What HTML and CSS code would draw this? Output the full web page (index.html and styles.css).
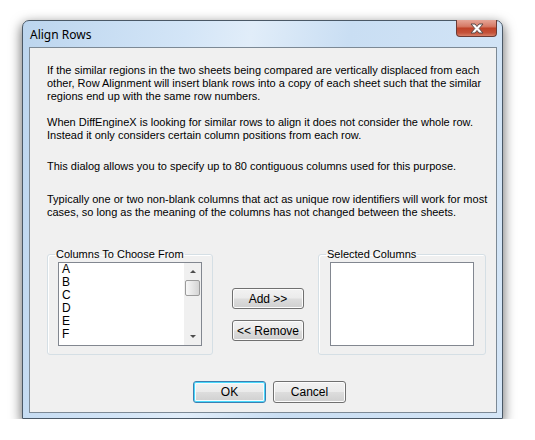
FILE: index.html
```html
<!DOCTYPE html>
<html lang="en">
<head>
    <meta charset="UTF-8">
    <title>Align Rows</title>
    <link rel="stylesheet" href="styles.css">
</head>
<body>
    <div class="window">
        <div class="titlebar">
            <span class="title">Align Rows</span>
            <div class="close">
                <svg width="16" height="11" viewBox="0 0 16 11">
                    <path d="M2 1 H6 L8 3.5 L10 1 H14 L10.2 5.5 L14 10 H10 L8 7.5 L6 10 H2 L5.8 5.5 Z" fill="#fff" stroke="#5a4a48" stroke-width="1" stroke-linejoin="round"/>
                </svg>
            </div>
        </div>

        <div class="client">
            <p class="p1">If the similar regions in the two sheets being compared are vertically displaced from each<br>
            other, Row Alignment will insert blank rows into a copy of each sheet such that the similar<br>
            regions end up with the same row numbers.</p>
            <p class="p2">When DiffEngineX is looking for similar rows to align it does not consider the whole row.<br>
            Instead it only considers certain column positions from each row.</p>
            <p class="p3">This dialog allows you to specify up to 80 contiguous columns used for this purpose.</p>
            <p class="p4">Typically one or two non-blank columns that act as unique row identifiers will work for most<br>
            cases, so long as the meaning of the columns has not changed between the sheets.</p>

            <div class="columns">
                <fieldset class="group group-left">
                    <legend>Columns To Choose From</legend>
                    <div class="listbox">
                        <div class="items">
                            <div>A</div>
                            <div>B</div>
                            <div>C</div>
                            <div>D</div>
                            <div>E</div>
                            <div>F</div>
                        </div>
                        <div class="scrollbar">
                            <div class="arrow up"></div>
                            <div class="thumb"></div>
                            <div class="track"></div>
                            <div class="arrow down"></div>
                        </div>
                    </div>
                </fieldset>

                <div class="middle">
                    <button type="button" class="btn">Add &gt;&gt;</button>
                    <button type="button" class="btn">&lt;&lt; Remove</button>
                </div>

                <fieldset class="group group-right">
                    <legend>Selected Columns</legend>
                    <div class="listbox empty"></div>
                </fieldset>
            </div>

            <div class="actions">
                <button type="button" class="btn btn-default">OK</button>
                <button type="button" class="btn">Cancel</button>
            </div>
        </div>
    </div>
</body>
</html>
```

FILE: styles.css
```css
body {
    margin: 0;
    background-color: #ffffff;
    font-family: "Liberation Sans", Arial, sans-serif;
    font-size: 11px;
    color: #000;
}

/* window frame */
.window {
    box-sizing: border-box;
    width: 481px;
    height: 399px;
    margin: 20px 0 0 22px;
    padding: 0 5px 5px 6px;
    border: 1px solid #4a5866;
    border-radius: 7px 7px 0 0;
    background: linear-gradient(100deg, #bcd5ee 0%, #d3e5f7 30%, #e1edf9 42%, #c9def3 60%, #d5e6f7 100%);
    box-shadow: 0 4px 12px 1px rgba(0, 0, 0, 0.55);
}

.titlebar {
    height: 26px;
    display: flex;
    justify-content: space-between;
    align-items: flex-start;
}

.title {
    font-family: "Noto Sans", "Liberation Sans", sans-serif;
    font-size: 12px;
    line-height: 14px;
    margin-top: 7px;
    margin-left: 1px;
    color: #000;
}

.close {
    width: 41px;
    height: 17px;
    box-sizing: border-box;
    margin-top: -1px;
    border: 1px solid #6b3b35;
    border-top: none;
    border-radius: 0 0 4px 4px;
    background: linear-gradient(#e6a596 0%, #d67a66 40%, #bf4329 52%, #c4523a 80%, #d77f67 100%);
    display: flex;
    align-items: center;
    justify-content: center;
}

/* client area */
.client {
    box-sizing: border-box;
    height: 366px;
    border: 1px solid #7c8995;
    background-color: #f0f0f0;
    padding: 16px 0 0 17px;
}

.client p {
    margin: 0;
    line-height: 13px;
    white-space: nowrap;
}

.p1 { margin-bottom: 13px !important; }
.p2 { margin-bottom: 18px !important; }
.p3 { margin-bottom: 20px !important; }

.columns {
    display: flex;
    align-items: flex-start;
    margin-top: 29px;
}

.group {
    margin: 0;
    border: 1px solid #d5dfe5;
    border-radius: 3px;
    padding: 1px 10px 8px 10px;
    box-shadow: inset 1px 1px 0 #fff;
}

.group legend {
    padding: 0 1px;
    margin-left: -3px;
    line-height: 13px;
}

.group-left {
    width: 166px;
    box-sizing: border-box;
}

.group-right {
    width: 168px;
    box-sizing: border-box;
    padding-left: 11px;
    padding-right: 11px;
}

.group-right legend {
    margin-left: -4px;
}

.listbox {
    height: 84px;
    box-sizing: border-box;
    border: 1px solid #828790;
    background-color: #fff;
    display: flex;
}

.items {
    flex: 1;
    padding: 0 0 0 3px;
}

.items div {
    line-height: 13px;
    font-size: 12px;
}

.scrollbar {
    width: 17px;
    background-color: #f0f0f0;
    display: flex;
    flex-direction: column;
    align-items: center;
}

.arrow {
    height: 17px;
    width: 17px;
    display: flex;
    align-items: center;
    justify-content: center;
}

.arrow.up::before {
    content: "";
    border-left: 3px solid transparent;
    border-right: 3px solid transparent;
    border-bottom: 3px solid #4d4d4d;
}

.arrow.down::before {
    content: "";
    border-left: 3px solid transparent;
    border-right: 3px solid transparent;
    border-top: 3px solid #4d4d4d;
}

.thumb {
    width: 15px;
    height: 16px;
    box-sizing: border-box;
    border: 1px solid #9b9b9b;
    border-radius: 2px;
    background: linear-gradient(to right, #f7f7f7, #e6e6e6 50%, #d4d4d4);
}

.track {
    flex: 1;
}

.middle {
    width: 72px;
    margin: 40px 14px 0 19px;
    display: flex;
    flex-direction: column;
    gap: 11px;
}

/* buttons */
.btn {
    font-family: "Liberation Sans", Arial, sans-serif;
    font-size: 12px;
    color: #000;
    width: 72px;
    height: 21px;
    padding: 0;
    border: 1px solid #707070;
    border-radius: 3px;
    background: linear-gradient(#f2f2f2 0%, #ebebeb 48%, #dddddd 52%, #cfcfcf 100%);
    box-shadow: inset 0 0 0 1px #fcfcfc;
}

.actions {
    display: flex;
    gap: 7px;
    margin: 26px 0 0 146px;
}

.actions .btn {
    width: 73px;
    height: 22px;
}

.btn-default {
    border-color: #3c7fb1;
    box-shadow: inset 0 0 0 1px #48d8fb, inset 0 0 0 2px #f4fbfe;
}
```
